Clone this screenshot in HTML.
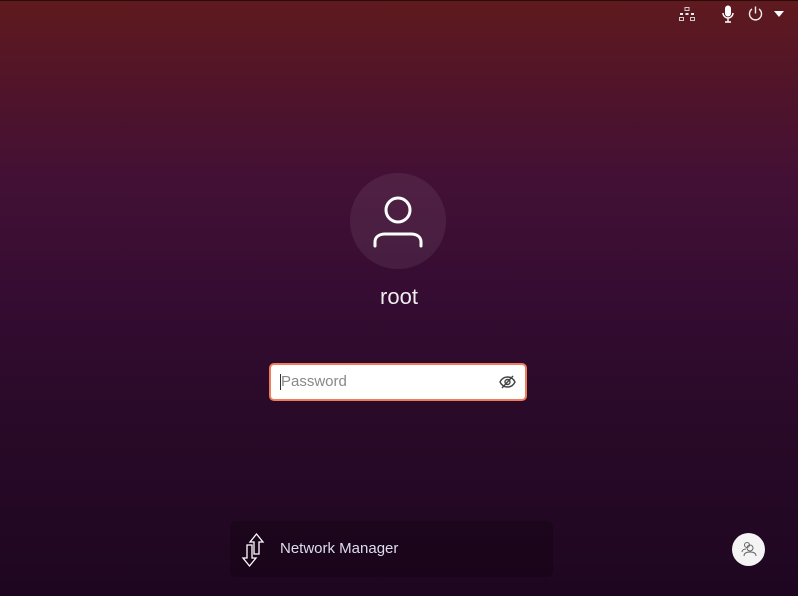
<!DOCTYPE html>
<html><head><meta charset="utf-8"><style>
html,body{margin:0;padding:0}
body{width:798px;height:596px;position:relative;overflow:hidden;font-family:"Liberation Sans",sans-serif;
background:linear-gradient(180deg,#5f1a1e 0%,#531527 12%,#431035 30%,#350c32 50%,#290a28 70%,#1e0620 100%);}
.topline{position:absolute;left:0;top:0;width:798px;height:1px;background:#2a0a0a}
.avatar{position:absolute;left:350px;top:173px;width:96px;height:96px;border-radius:50%;background:rgba(255,255,255,0.07)}
.name{position:absolute;left:0;width:798px;top:284px;text-align:center;color:#eee;font-size:22px}
.pw{position:absolute;left:269px;top:363px;width:254px;height:34px;border:2px solid #ef7c5a;border-radius:5px;background:#fff}
.pw span{position:absolute;left:10px;top:8px;font-size:15px;color:#888}
.pw .cur{position:absolute;left:9px;top:9px;width:1px;height:16px;background:#333}
.nm{position:absolute;left:230px;top:521px;width:323px;height:56px;border-radius:6px;background:rgba(0,0,0,0.18)}
.nm span{position:absolute;left:50px;top:19px;color:#dde;font-size:15px}
.ub{position:absolute;left:732px;top:533px;width:33px;height:33px;border-radius:50%;background:#f4f4f4}
</style></head><body>
<div class="topline"></div>
<svg style="position:absolute;left:678px;top:6px" width="18" height="16" viewBox="0 0 18 16">
<g fill="none" stroke="#ccc" stroke-width="1"><rect x="7" y="1.5" width="4" height="3"/><rect x="1.5" y="11.5" width="4" height="3"/><rect x="12.5" y="11.5" width="4" height="3"/></g>
<g fill="#eee"><rect x="2" y="7" width="3" height="2"/><rect x="7.5" y="7" width="3" height="2"/><rect x="13" y="7" width="3" height="2"/></g></svg>
<svg style="position:absolute;left:721px;top:5px" width="14" height="18" viewBox="0 0 14 18">
<rect x="4" y="0.5" width="6" height="11" rx="3" fill="#fff"/><path d="M2 8a5 5 0 0 0 10 0M7 13v4M4 17h6" stroke="#fff" stroke-width="1.4" fill="none"/></svg>
<svg style="position:absolute;left:747px;top:5px" width="17" height="17" viewBox="0 0 17 17">
<path d="M5 4a6 6 0 1 0 7 0M8.5 1.5v7" stroke="#eee" stroke-width="1.4" fill="none"/></svg>
<svg style="position:absolute;left:774px;top:11px" width="10" height="6"><path d="M0 0h10L5 6z" fill="#fff"/></svg>
<div class="avatar"></div>
<svg style="position:absolute;left:350px;top:173px" width="96" height="96" viewBox="0 0 96 96">
<g fill="none" stroke="#fff" stroke-width="3" stroke-linecap="round"><circle cx="48" cy="37" r="12"/><path d="M25 73v-4c0-5 4-8 10-8h26c6 0 10 3 10 8v4"/></g></svg>
<div class="name">root</div>
<div class="pw"><div class="cur"></div><span>Password</span>
<svg style="position:absolute;left:228px;top:10px" width="17" height="14" viewBox="0 0 17 14">
<g fill="none" stroke="#444" stroke-width="1.4"><path d="M1 7c2-4 5-5 7.5-5s5.5 1 7.5 5c-2 4-5 5-7.5 5S3 11 1 7z"/><circle cx="8.5" cy="7" r="2.5"/><path d="M3 13L14 1"/></g></svg></div>
<div class="nm">
<svg style="position:absolute;left:8px;top:11px" width="30" height="36" viewBox="0 0 30 36">
<g fill="none" stroke="#fff" stroke-width="1.3" stroke-linejoin="miter">
<path d="M16 22V10h-4l6.5-8 6.5 8h-4v12z"/>
<path d="M9 13v13H5l6.5 8 6.5-8h-4V13z"/></g></svg>
<span>Network Manager</span></div>
<div class="ub"><svg width="33" height="33" viewBox="0 0 33 33"><g fill="none" stroke="#666" stroke-width="1"><circle cx="18" cy="15" r="3"/><path d="M12 23c0-3 3-4 6-4s6 1 6 4"/><circle cx="15" cy="12" r="2.5"/><path d="M10 19c0-2 2-3 4-3"/></g></svg></div>
</body></html>
